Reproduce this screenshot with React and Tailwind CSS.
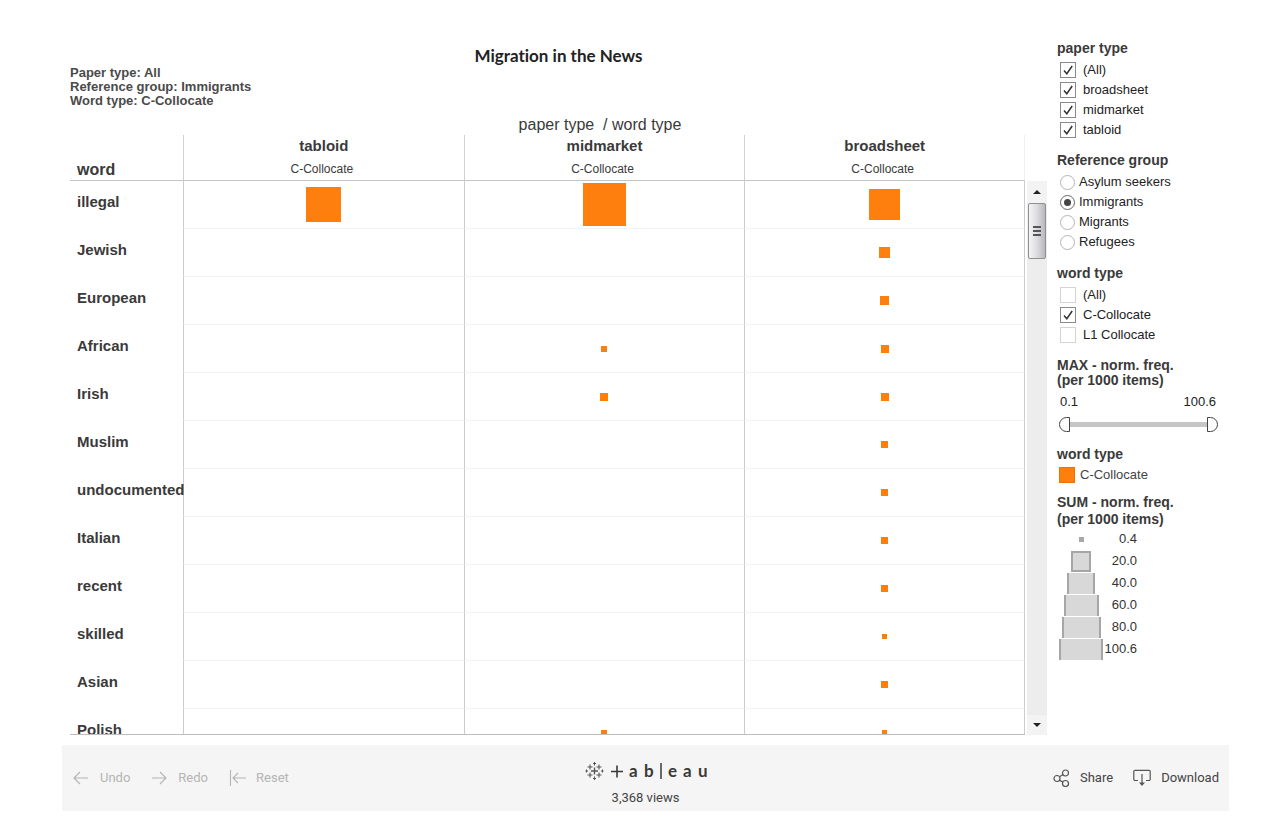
import { useState } from "react";

const COLUMNS = ["tabloid", "midmarket", "broadsheet"];

// size of the mark in px per column, 0 = no mark
const ROWS = [
  { word: "illegal", marks: [35, 43, 31] },
  { word: "Jewish", marks: [0, 0, 11] },
  { word: "European", marks: [0, 0, 9] },
  { word: "African", marks: [0, 6, 8] },
  { word: "Irish", marks: [0, 8, 8] },
  { word: "Muslim", marks: [0, 0, 7] },
  { word: "undocumented", marks: [0, 0, 7] },
  { word: "Italian", marks: [0, 0, 7] },
  { word: "recent", marks: [0, 0, 7] },
  { word: "skilled", marks: [0, 0, 5] },
  { word: "Asian", marks: [0, 0, 7] },
  { word: "Polish", marks: [0, 6, 5] },
];

const SIZES = [
  { label: "20.0", width: 20 },
  { label: "40.0", width: 28 },
  { label: "60.0", width: 35 },
  { label: "80.0", width: 39 },
  { label: "100.6", width: 44 },
];

const CheckItem = ({ label, checked, onChange }) => (
  <label className="flex h-5 items-center gap-[7px] pl-[3px]">
    <span className="grid">
      <input
        type="checkbox"
        checked={checked}
        onChange={onChange}
        className="col-start-1 row-start-1 size-4 appearance-none border border-[#d4d4d4] bg-white checked:border-[#8a8a8a]"
      />
      {checked && (
        <svg viewBox="0 0 16 16" className="pointer-events-none col-start-1 row-start-1 size-4" fill="none" stroke="#333" strokeWidth="1.5">
          <path d="M4 8.5 L6.8 11.8 L12.2 4" />
        </svg>
      )}
    </span>
    {label}
  </label>
);

const RadioItem = ({ label, checked, onChange }) => (
  <label className="flex h-5 items-center gap-1 pl-[3px]">
    <span className="grid place-items-center">
      <input
        type="radio"
        name="reference-group"
        checked={checked}
        onChange={onChange}
        className="col-start-1 row-start-1 size-[15px] appearance-none rounded-full border border-[#b4b4b4] bg-white checked:border-[#666]"
      />
      {checked && <span className="pointer-events-none col-start-1 row-start-1 size-[7px] rounded-full bg-[#444]" />}
    </span>
    {label}
  </label>
);

const CheckGroup = ({ title, options, initial }) => {
  const [selected, setSelected] = useState(initial);
  const toggle = (option) =>
    setSelected(selected.includes(option) ? selected.filter((o) => o !== option) : [...selected, option]);

  return (
    <fieldset>
      <legend className="text-sm leading-6 font-bold text-[#3a3a3a]">{title}</legend>
      {options.map((option) => (
        <CheckItem key={option} label={option} checked={selected.includes(option)} onChange={() => toggle(option)} />
      ))}
    </fieldset>
  );
};

const ReferenceGroup = () => {
  const [group, setGroup] = useState("Immigrants");

  return (
    <fieldset className="mt-2">
      <legend className="text-sm leading-6 font-bold text-[#3a3a3a]">Reference group</legend>
      {["Asylum seekers", "Immigrants", "Migrants", "Refugees"].map((option) => (
        <RadioItem key={option} label={option} checked={group === option} onChange={() => setGroup(option)} />
      ))}
    </fieldset>
  );
};

const FrequencyRange = () => {
  const [low, setLow] = useState(0.1);
  const [high, setHigh] = useState(100.6);

  return (
    <section className="mt-[13px]">
      <h2 className="text-sm leading-[15px] font-bold text-[#3a3a3a]">
        MAX - norm. freq.
        <br />
        (per 1000 items)
      </h2>
      <div className="mt-[6px] flex w-[159px] justify-between pl-[3px] leading-4">
        <span>{low}</span>
        <span>{high}</span>
      </div>
      <div className="relative mt-[6px] ml-[2px] flex h-4 w-[159px] items-center">
        <div className="mx-2 h-[5px] flex-1 bg-[#c6c6c6]" />
        <input
          type="range"
          aria-label="Minimum frequency"
          min="0.1"
          max="100.6"
          step="0.1"
          value={low}
          onChange={(e) => setLow(Number(e.target.value))}
          className="pointer-events-none absolute inset-0 h-4 w-full appearance-none bg-transparent [&::-webkit-slider-thumb]:pointer-events-auto [&::-webkit-slider-thumb]:h-[15px] [&::-webkit-slider-thumb]:w-[11px] [&::-webkit-slider-thumb]:appearance-none [&::-webkit-slider-thumb]:rounded-l-full [&::-webkit-slider-thumb]:border [&::-webkit-slider-thumb]:border-solid [&::-webkit-slider-thumb]:border-[#444] [&::-webkit-slider-thumb]:bg-white"
        />
        <input
          type="range"
          aria-label="Maximum frequency"
          min="0.1"
          max="100.6"
          step="0.1"
          value={high}
          onChange={(e) => setHigh(Number(e.target.value))}
          className="pointer-events-none absolute inset-0 h-4 w-full appearance-none bg-transparent [&::-webkit-slider-thumb]:pointer-events-auto [&::-webkit-slider-thumb]:h-[15px] [&::-webkit-slider-thumb]:w-[11px] [&::-webkit-slider-thumb]:appearance-none [&::-webkit-slider-thumb]:rounded-r-full [&::-webkit-slider-thumb]:border [&::-webkit-slider-thumb]:border-solid [&::-webkit-slider-thumb]:border-[#444] [&::-webkit-slider-thumb]:bg-white"
        />
      </div>
    </section>
  );
};

const Legends = () => (
  <>
    <section className="mt-[10px]">
      <h2 className="text-sm leading-6 font-bold text-[#3a3a3a]">word type</h2>
      <div className="flex h-[18px] items-center gap-[5px] pl-[2px] text-[#444]">
        <span className="size-4 border border-[#f07000] bg-[#ff7f0e]" />
        C-Collocate
      </div>
    </section>
    <section className="mt-[10px]">
      <h2 className="text-sm leading-[17px] font-bold text-[#3a3a3a]">
        SUM - norm. freq.
        <br />
        (per 1000 items)
      </h2>
      <ul className="ml-[2px] w-[78px] text-[#333]">
        <li className="flex h-[22px] items-center justify-between">
          <span className="flex w-11 justify-center">
            <span className="size-[5px] bg-[#a8a8a8]" />
          </span>
          0.4
        </li>
        {SIZES.map(({ label, width }, i) => (
          <li key={label} className="flex h-[22px] items-center justify-between">
            <span className="flex w-11 shrink-0 justify-center">
              <span
                className={`h-[21px] border-x-2 border-[#a6a6a6] bg-[#d8d8d8] ${i === 0 ? "border-y-2" : ""}`}
                style={{ width }}
              />
            </span>
            {label}
          </li>
        ))}
      </ul>
    </section>
  </>
);

const WordTable = () => (
  <div className="mt-[6px] flex">
    <div className="h-[621px] flex-1 overflow-hidden border-b border-[#bdbdbd]">
      <table className="w-full table-fixed border-separate border-spacing-0 text-[15px] text-[#3a3a3a]">
        <colgroup>
          <col className="w-[113px]" />
          <col />
          <col />
          <col />
        </colgroup>
        <thead>
          <tr className="h-[21px]">
            <td />
            <th colSpan={3} className="p-0 pr-2 text-base leading-5 font-normal whitespace-pre">
              {"paper type  / word type"}
            </th>
          </tr>
          <tr className="h-[22px]">
            <th rowSpan={2} className="border-b border-[#c4c4c4] p-0 pl-[7px] text-left align-bottom text-base leading-5">
              word
            </th>
            {COLUMNS.map((column) => (
              <th key={column} className="border-l border-[#d0d0d0] p-0 leading-5 last:border-r last:border-r-[#f0f0f0]">
                {column}
              </th>
            ))}
          </tr>
          <tr className="h-6">
            {COLUMNS.map((column) => (
              <th
                key={column}
                className="border-b border-l border-[#c4c4c4] border-l-[#d0d0d0] p-0 pr-1 text-xs leading-5 font-normal last:border-r last:border-r-[#f0f0f0]"
              >
                C-Collocate
              </th>
            ))}
          </tr>
        </thead>
        <tbody>
          {ROWS.map(({ word, marks }) => (
            <tr key={word} className="h-12">
              <th className="p-0 pb-[6px] pl-[7px] text-left">{word}</th>
              {marks.map((size, i) => (
                <td
                  key={COLUMNS[i]}
                  className="border-b border-l border-b-[#f3f3f3] border-l-[#cbcbcb] p-0 last:border-r last:border-r-[#cbcbcb]"
                >
                  {size > 0 && <div className="mx-auto bg-[#ff7f0e]" style={{ width: size, height: size }} />}
                </td>
              ))}
            </tr>
          ))}
        </tbody>
      </table>
    </div>
    <div className="mt-[67px] ml-[2px] flex w-5 flex-col items-center bg-[#ededed]">
      <button aria-label="Scroll up" className="flex h-[22px] w-full items-center justify-center bg-[#f3f3f3]">
        <svg viewBox="0 0 8 4" className="h-1 w-2" fill="#222">
          <path d="M0 4 L4 0 L8 4 Z" />
        </svg>
      </button>
      <div className="flex h-14 w-[18px] flex-col items-center justify-center gap-[2px] rounded-xs border border-[#8f8f8f] bg-linear-to-r from-[#f4f4f4] via-[#dcdce0] to-[#b9b9bd]">
        <span className="h-[2px] w-2 bg-[#555]" />
        <span className="h-[2px] w-2 bg-[#555]" />
        <span className="h-[2px] w-2 bg-[#555]" />
      </div>
      <button aria-label="Scroll down" className="mt-auto flex h-5 w-full items-center justify-center bg-[#f3f3f3]">
        <svg viewBox="0 0 8 4" className="h-1 w-2" fill="#222">
          <path d="M0 0 L4 4 L8 0 Z" />
        </svg>
      </button>
    </div>
  </div>
);

const TableauLogo = () => (
  <svg viewBox="0 0 122 20" className="h-5 w-[122px]" role="img" aria-label="tableau" fill="none" stroke="#555">
    <path strokeWidth="1.3" d="M9.5 6.5v7M6 10h7" />
    <path strokeWidth="1.1" d="M5 3.5v5M2.5 6h5M14 3.5v5M11.5 6h5M5 11.5v5M2.5 14h5M14 11.5v5M11.5 14h5" />
    <path strokeWidth="1" d="M9.5 1v3.500M8 2.500h3M9.500 15.500v3.500M8 17.500h3M1.500 8.500v3M0.500 10h2.500M17.500 8.500v3M16 10h2.500" />
    <path stroke="#3a3a3a" strokeWidth="1.6" d="M32 4.5v12M26 10.5h12" />
    <path stroke="#3a3a3a" strokeWidth="1.5" d="M76 2v16" />
    <g fill="#3a3a3a" stroke="none" fontFamily="Lato, sans-serif" fontSize="17" fontWeight="700">
      <text x="44" y="16">a</text>
      <text x="59" y="16">b</text>
      <text x="83" y="16">e</text>
      <text x="98" y="16">a</text>
      <text x="113" y="16">u</text>
    </g>
  </svg>
);

const ArrowIcon = ({ d }) => (
  <svg viewBox="0 0 17 16" className="h-4 w-[17px]" fill="none" stroke="currentColor" strokeWidth="1.1">
    <path d={d} />
  </svg>
);

const Toolbar = () => (
  <footer className="mt-[10px] grid h-[66px] grid-cols-3 items-center bg-[#f5f5f5] font-[Roboto,sans-serif] text-[13px] text-[#444]">
    <div className="flex gap-[21px] pl-[11px] text-[#b4b4b4]">
      <button className="flex items-center gap-[10px]">
        <ArrowIcon d="M15 8H1M7 2L1 8l6 6" />
        Undo
      </button>
      <button className="flex items-center gap-[10px]">
        <ArrowIcon d="M1 8h14M9 2l6 6l-6 6" />
        Redo
      </button>
      <button className="flex items-center gap-[10px]">
        <ArrowIcon d="M1.5 0v16M17 8H4M9 3L4 8l5 5" />
        Reset
      </button>
    </div>
    <div className="flex flex-col items-center gap-[7px] pt-3">
      <TableauLogo />
      <span className="leading-5">3,368 views</span>
    </div>
    <div className="flex justify-end gap-5 pr-[10px]">
      <button className="flex items-center gap-[10px]">
        <svg viewBox="0 0 17 18" className="h-[18px] w-[17px]" fill="none" stroke="#555" strokeWidth="1.2">
          <circle cx="4" cy="9.5" r="3" />
          <circle cx="12.5" cy="4" r="3" />
          <circle cx="12.5" cy="14.5" r="3" />
          <path d="M6.6 7.8l3.4-2.2M6.5 11.2l3.500 1.900" />
        </svg>
        Share
      </button>
      <button className="flex items-center gap-[10px]">
        <svg viewBox="0 0 18 18" className="size-[18px]" fill="none" stroke="#555" strokeWidth="1.2">
          <path d="M5 11.500H2a1.200 1.200 0 0 1-1.200-1.200V2.500A1.200 1.200 0 0 1 2 1.300h14a1.200 1.200 0 0 1 1.200 1.200v7.800a1.200 1.200 0 0 1-1.200 1.200h-3" />
          <path d="M9 5v10" />
          <path d="M6 13.5h6L9 17z" fill="#555" stroke="none" />
        </svg>
        Download
      </button>
    </div>
  </footer>
);

const App = () => (
  <div className="min-h-screen bg-white pt-9 pr-[50px] pl-[62px] font-['Liberation_Sans',Arial,sans-serif]">
    <div className="flex gap-[10px] pl-2">
      <main className="min-w-0 flex-1 pt-[10px]">
        <h1 className="text-center font-[Lato,sans-serif] text-[17px] leading-5 font-bold text-[#222] [font-variant-ligatures:none]">
          Migration in the News
        </h1>
        <p className="text-[13px] leading-[14px] font-bold text-[#4a4a4a]">
          Paper type: All
          <br />
          Reference group: Immigrants
          <br />
          Word type: C-Collocate
        </p>
        <WordTable />
      </main>
      <aside className="w-[172px] text-[13px] text-[#222]">
        <CheckGroup
          title="paper type"
          options={["(All)", "broadsheet", "midmarket", "tabloid"]}
          initial={["(All)", "broadsheet", "midmarket", "tabloid"]}
        />
        <ReferenceGroup />
        <div className="mt-[9px]">
          <CheckGroup title="word type" options={["(All)", "C-Collocate", "L1 Collocate"]} initial={["C-Collocate"]} />
        </div>
        <FrequencyRange />
        <Legends />
      </aside>
    </div>
    <Toolbar />
  </div>
);

export default App;
